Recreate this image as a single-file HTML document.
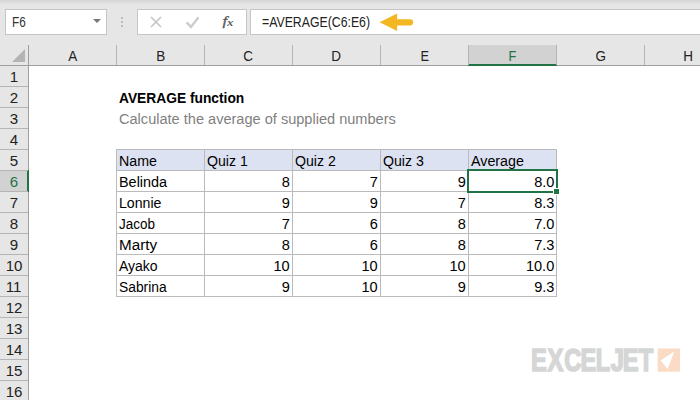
<!DOCTYPE html>
<html><head><meta charset="utf-8"><title>AVERAGE function</title>
<style>
html,body{margin:0;padding:0;}
body{width:700px;height:400px;overflow:hidden;position:relative;background:#fff;font-family:"Liberation Sans",sans-serif;color:#000;}
.abs{position:absolute;}
.t{position:absolute;white-space:nowrap;font-size:14px;line-height:21px;height:21px;}
.t span{display:inline-block;transform-origin:left center;transform:scaleX(1.04);}
.r span{transform-origin:right center;}
.r{text-align:right;}
.c{text-align:center;}
.c span{transform-origin:center center;}
.hd{color:#222;font-size:14.5px;}
</style></head><body>

<div class="abs" style="left:0;top:0;width:700px;height:45px;background:#e6e6e6;"></div>
<div class="abs" style="left:0;top:0;width:700px;height:5px;background:linear-gradient(#d6d6d6,#e6e6e6);"></div>
<div class="abs" style="left:5px;top:9px;width:100px;height:24px;background:#fff;border:1px solid #c6c6c6;"></div>
<div class="t" style="left:12px;top:12px;color:#333;"><span style="transform:scaleX(0.84)">F6</span></div>
<div class="abs" style="left:92.5px;top:19px;width:0;height:0;border-left:4px solid transparent;border-right:4px solid transparent;border-top:4px solid #777;"></div>
<div class="abs" style="left:121px;top:17px;width:2px;height:2px;background:#bcbcbc;"></div>
<div class="abs" style="left:121px;top:21px;width:2px;height:2px;background:#bcbcbc;"></div>
<div class="abs" style="left:121px;top:25px;width:2px;height:2px;background:#bcbcbc;"></div>
<div class="abs" style="left:137px;top:9px;width:108px;height:24px;background:#fff;border:1px solid #c6c6c6;"></div>
<svg class="abs" style="left:137px;top:9px" width="110" height="26" viewBox="0 0 110 26">
<path d="M14 8 L24 18 M24 8 L14 18" stroke="#c4c4c4" stroke-width="1.6" fill="none"/>
<path d="M49.6 13.4 L54 17.9 L61.6 8.2" stroke="#cdcdcd" stroke-width="2.4" fill="none"/>
<text transform="translate(85.6 16.3) scale(1.4 1)" font-family="Liberation Serif,serif" font-style="italic" font-size="12" fill="#5a5a5a" stroke="#5a5a5a" stroke-width="0.3">f</text>
<text transform="translate(90 17.2) scale(1.15 1)" font-family="Liberation Serif,serif" font-style="italic" font-weight="bold" font-size="11" fill="#5a5a5a">x</text>
</svg>
<div class="abs" style="left:250px;top:9px;width:460px;height:24px;background:#fff;border:1px solid #c6c6c6;"></div>
<div class="t" style="left:262px;top:12px;color:#222;"><span style="transform:scaleX(0.878)">=AVERAGE(C6:E6)</span></div>
<svg class="abs" style="left:375px;top:10px" width="40" height="24" viewBox="0 0 40 24">
<path transform="translate(0.6 0.4)" d="M4 11.8 L21.5 3 L21.5 8.8 L34.5 8.8 A3.1 3.1 0 0 1 34.5 15 L21.5 15 L21.5 20.7 Z" fill="#f3b821"/>
</svg>
<div class="abs" style="left:0;top:45px;width:700px;height:20px;background:#e6e6e6;"></div>
<div class="abs" style="left:0;top:65px;width:700px;height:1px;background:#9f9f9f;"></div>
<div class="abs" style="left:0;top:66px;width:28px;height:334px;background:#e6e6e6;"></div>
<div class="abs" style="left:28px;top:45px;width:1px;height:355px;background:#9f9f9f;"></div>
<div class="abs" style="left:469px;top:45px;width:87px;height:19px;background:#d2d2d2;"></div>
<div class="abs" style="left:468px;top:64px;width:89px;height:2px;background:#217346;"></div>
<div class="abs" style="left:0;top:171px;width:27px;height:20px;background:#d2d2d2;"></div>
<div class="abs" style="left:27px;top:170px;width:2px;height:22px;background:#217346;"></div>
<div class="abs" style="left:116px;top:45px;width:1px;height:20px;background:#b5b5b5;"></div>
<div class="abs" style="left:204px;top:45px;width:1px;height:20px;background:#b5b5b5;"></div>
<div class="abs" style="left:292px;top:45px;width:1px;height:20px;background:#b5b5b5;"></div>
<div class="abs" style="left:380px;top:45px;width:1px;height:20px;background:#b5b5b5;"></div>
<div class="abs" style="left:468px;top:45px;width:1px;height:20px;background:#b5b5b5;"></div>
<div class="abs" style="left:556px;top:45px;width:1px;height:20px;background:#b5b5b5;"></div>
<div class="abs" style="left:644px;top:45px;width:1px;height:20px;background:#b5b5b5;"></div>
<div class="abs" style="left:732px;top:45px;width:1px;height:20px;background:#b5b5b5;"></div>
<div class="abs" style="left:0;top:86px;width:28px;height:1px;background:#b5b5b5;"></div>
<div class="abs" style="left:0;top:107px;width:28px;height:1px;background:#b5b5b5;"></div>
<div class="abs" style="left:0;top:128px;width:28px;height:1px;background:#b5b5b5;"></div>
<div class="abs" style="left:0;top:149px;width:28px;height:1px;background:#b5b5b5;"></div>
<div class="abs" style="left:0;top:170px;width:28px;height:1px;background:#b5b5b5;"></div>
<div class="abs" style="left:0;top:191px;width:28px;height:1px;background:#b5b5b5;"></div>
<div class="abs" style="left:0;top:212px;width:28px;height:1px;background:#b5b5b5;"></div>
<div class="abs" style="left:0;top:233px;width:28px;height:1px;background:#b5b5b5;"></div>
<div class="abs" style="left:0;top:254px;width:28px;height:1px;background:#b5b5b5;"></div>
<div class="abs" style="left:0;top:275px;width:28px;height:1px;background:#b5b5b5;"></div>
<div class="abs" style="left:0;top:296px;width:28px;height:1px;background:#b5b5b5;"></div>
<div class="abs" style="left:0;top:317px;width:28px;height:1px;background:#b5b5b5;"></div>
<div class="abs" style="left:0;top:338px;width:28px;height:1px;background:#b5b5b5;"></div>
<div class="abs" style="left:0;top:359px;width:28px;height:1px;background:#b5b5b5;"></div>
<div class="abs" style="left:0;top:380px;width:28px;height:1px;background:#b5b5b5;"></div>
<div class="abs" style="left:0;top:401px;width:28px;height:1px;background:#b5b5b5;"></div>
<svg class="abs" style="left:0;top:45px" width="28" height="20"><path d="M25 4 L25 17 L12 17 Z" fill="#b4b4b4"/></svg>
<div class="t c hd" style="left:29px;top:46px;width:87px;color:#222;"><span style="transform:scaleX(0.93)">A</span></div>
<div class="t c hd" style="left:117px;top:46px;width:87px;color:#222;"><span style="transform:scaleX(0.93)">B</span></div>
<div class="t c hd" style="left:205px;top:46px;width:87px;color:#222;"><span style="transform:scaleX(0.93)">C</span></div>
<div class="t c hd" style="left:293px;top:46px;width:87px;color:#222;"><span style="transform:scaleX(0.93)">D</span></div>
<div class="t c hd" style="left:381px;top:46px;width:87px;color:#222;"><span style="transform:scaleX(0.88)">E</span></div>
<div class="t c hd" style="left:469px;top:46px;width:87px;color:#217346;"><span style="transform:scaleX(0.88)">F</span></div>
<div class="t c hd" style="left:557px;top:46px;width:87px;color:#222;"><span style="transform:scaleX(0.93)">G</span></div>
<div class="t c hd" style="left:645px;top:46px;width:87px;color:#222;"><span style="transform:scaleX(0.93)">H</span></div>
<div class="t c hd" style="left:0;top:67px;width:28px;color:#222;"><span>1</span></div>
<div class="t c hd" style="left:0;top:88px;width:28px;color:#222;"><span>2</span></div>
<div class="t c hd" style="left:0;top:109px;width:28px;color:#222;"><span>3</span></div>
<div class="t c hd" style="left:0;top:130px;width:28px;color:#222;"><span>4</span></div>
<div class="t c hd" style="left:0;top:151px;width:28px;color:#222;"><span>5</span></div>
<div class="t c hd" style="left:0;top:172px;width:28px;color:#217346;"><span>6</span></div>
<div class="t c hd" style="left:0;top:193px;width:28px;color:#222;"><span>7</span></div>
<div class="t c hd" style="left:0;top:214px;width:28px;color:#222;"><span>8</span></div>
<div class="t c hd" style="left:0;top:235px;width:28px;color:#222;"><span>9</span></div>
<div class="t c hd" style="left:0;top:256px;width:28px;color:#222;"><span>10</span></div>
<div class="t c hd" style="left:0;top:277px;width:28px;color:#222;"><span>11</span></div>
<div class="t c hd" style="left:0;top:298px;width:28px;color:#222;"><span>12</span></div>
<div class="t c hd" style="left:0;top:319px;width:28px;color:#222;"><span>13</span></div>
<div class="t c hd" style="left:0;top:340px;width:28px;color:#222;"><span>14</span></div>
<div class="t c hd" style="left:0;top:361px;width:28px;color:#222;"><span>15</span></div>
<div class="t c hd" style="left:0;top:382px;width:28px;color:#222;"><span>16</span></div>
<div class="t" style="left:119px;top:88px;font-weight:bold;"><span style="transform:scaleX(0.984)">AVERAGE function</span></div>
<div class="t" style="left:119px;top:109px;color:#7f7f7f;"><span>Calculate the average of supplied numbers</span></div>
<div class="abs" style="left:117px;top:150px;width:439px;height:20px;background:#dde2f3;"></div>
<div class="abs" style="left:116px;top:149px;width:441px;height:1px;background:#bbbbbb;"></div>
<div class="abs" style="left:116px;top:170px;width:441px;height:1px;background:#bbbbbb;"></div>
<div class="abs" style="left:116px;top:191px;width:441px;height:1px;background:#bbbbbb;"></div>
<div class="abs" style="left:116px;top:212px;width:441px;height:1px;background:#bbbbbb;"></div>
<div class="abs" style="left:116px;top:233px;width:441px;height:1px;background:#bbbbbb;"></div>
<div class="abs" style="left:116px;top:254px;width:441px;height:1px;background:#bbbbbb;"></div>
<div class="abs" style="left:116px;top:275px;width:441px;height:1px;background:#bbbbbb;"></div>
<div class="abs" style="left:116px;top:296px;width:441px;height:1px;background:#bbbbbb;"></div>
<div class="abs" style="left:116px;top:149px;width:1px;height:148px;background:#bbbbbb;"></div>
<div class="abs" style="left:204px;top:149px;width:1px;height:148px;background:#bbbbbb;"></div>
<div class="abs" style="left:292px;top:149px;width:1px;height:148px;background:#bbbbbb;"></div>
<div class="abs" style="left:380px;top:149px;width:1px;height:148px;background:#bbbbbb;"></div>
<div class="abs" style="left:468px;top:149px;width:1px;height:148px;background:#bbbbbb;"></div>
<div class="abs" style="left:556px;top:149px;width:1px;height:148px;background:#bbbbbb;"></div>
<div class="t" style="left:119px;top:151px;"><span style="transform:scaleX(1.015)">Name</span></div>
<div class="t" style="left:207px;top:151px;"><span style="transform:scaleX(1.01)">Quiz 1</span></div>
<div class="t" style="left:295px;top:151px;"><span style="transform:scaleX(1.01)">Quiz 2</span></div>
<div class="t" style="left:383px;top:151px;"><span style="transform:scaleX(1.01)">Quiz 3</span></div>
<div class="t" style="left:471px;top:151px;"><span style="transform:scaleX(1.02)">Average</span></div>
<div class="t" style="left:119px;top:172px;"><span style="transform:scaleX(1.03)">Belinda</span></div>
<div class="t r" style="left:205px;width:85px;top:172px;"><span>8</span></div>
<div class="t r" style="left:293px;width:85px;top:172px;"><span>7</span></div>
<div class="t r" style="left:381px;width:85px;top:172px;"><span>9</span></div>
<div class="t r" style="left:469px;width:85px;top:172px;"><span>8.0</span></div>
<div class="t" style="left:119px;top:193px;"><span style="transform:scaleX(1.01)">Lonnie</span></div>
<div class="t r" style="left:205px;width:85px;top:193px;"><span>9</span></div>
<div class="t r" style="left:293px;width:85px;top:193px;"><span>9</span></div>
<div class="t r" style="left:381px;width:85px;top:193px;"><span>7</span></div>
<div class="t r" style="left:469px;width:85px;top:193px;"><span>8.3</span></div>
<div class="t" style="left:119px;top:214px;"><span style="transform:scaleX(0.96)">Jacob</span></div>
<div class="t r" style="left:205px;width:85px;top:214px;"><span>7</span></div>
<div class="t r" style="left:293px;width:85px;top:214px;"><span>6</span></div>
<div class="t r" style="left:381px;width:85px;top:214px;"><span>8</span></div>
<div class="t r" style="left:469px;width:85px;top:214px;"><span>7.0</span></div>
<div class="t" style="left:119px;top:235px;"><span style="transform:scaleX(1.087)">Marty</span></div>
<div class="t r" style="left:205px;width:85px;top:235px;"><span>8</span></div>
<div class="t r" style="left:293px;width:85px;top:235px;"><span>6</span></div>
<div class="t r" style="left:381px;width:85px;top:235px;"><span>8</span></div>
<div class="t r" style="left:469px;width:85px;top:235px;"><span>7.3</span></div>
<div class="t" style="left:119px;top:256px;"><span style="transform:scaleX(1.0)">Ayako</span></div>
<div class="t r" style="left:205px;width:85px;top:256px;"><span>10</span></div>
<div class="t r" style="left:293px;width:85px;top:256px;"><span>10</span></div>
<div class="t r" style="left:381px;width:85px;top:256px;"><span>10</span></div>
<div class="t r" style="left:469px;width:85px;top:256px;"><span>10.0</span></div>
<div class="t" style="left:119px;top:277px;"><span style="transform:scaleX(0.986)">Sabrina</span></div>
<div class="t r" style="left:205px;width:85px;top:277px;"><span>9</span></div>
<div class="t r" style="left:293px;width:85px;top:277px;"><span>10</span></div>
<div class="t r" style="left:381px;width:85px;top:277px;"><span>9</span></div>
<div class="t r" style="left:469px;width:85px;top:277px;"><span>9.3</span></div>
<div class="abs" style="left:467px;top:169px;width:87px;height:20px;border:2px solid #217346;"></div>
<div class="abs" style="left:553px;top:188px;width:5px;height:5px;background:#217346;border:1px solid #fff;"></div>
<svg class="abs" style="left:525px;top:340px" width="165" height="45" viewBox="0 0 165 45">
<text transform="scale(0.77 1)" x="7.65 29.24 50.85 72.06 91.76 111.37 126.87 147.82" y="30.90" font-family="Liberation Sans,sans-serif" font-weight="bold" font-size="30.7" fill="#d5d6d6" stroke="#d5d6d6" stroke-width="1.6">EXCELJET</text>
<rect x="132.7" y="8.5" width="22.3" height="23.2" fill="#fadbc5"/>
<path d="M149.3 11.5 L135.6 20.5 L142.6 29 Z" fill="#fff"/>
</svg>
</body></html>
